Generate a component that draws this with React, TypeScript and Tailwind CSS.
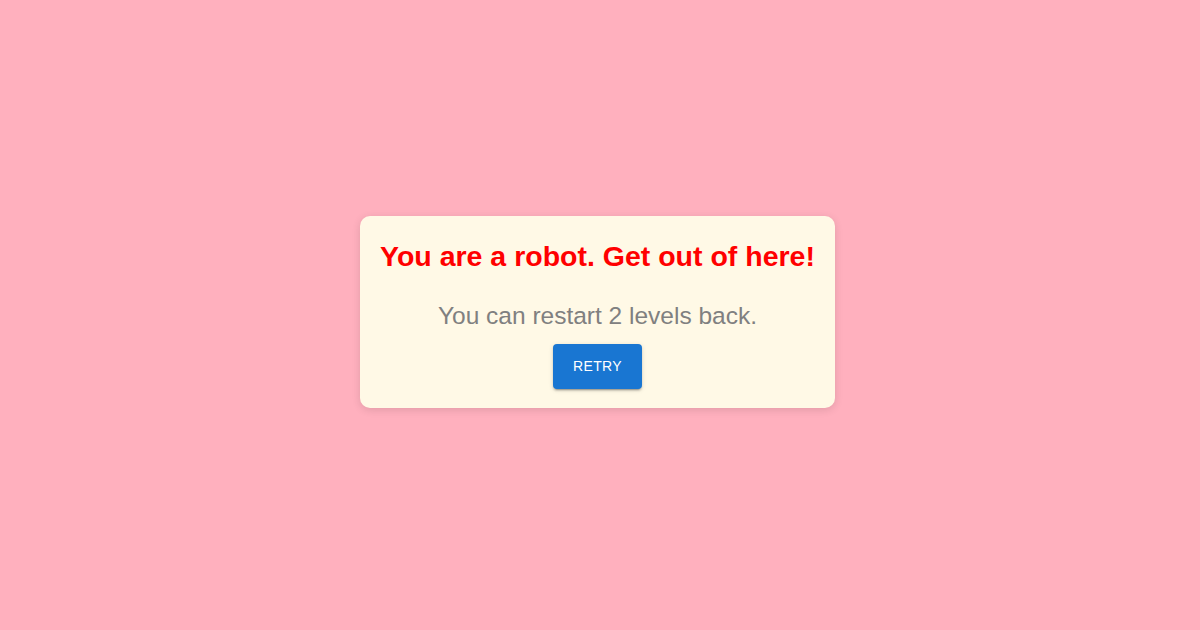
export default function App() {
  return (
    <div
      className="flex h-screen w-full items-center justify-center bg-[#ffb0be] pb-[6px] pr-[5px]"
      style={{ fontFamily: '"Liberation Sans", Arial, sans-serif' }}
    >
      <div className="flex flex-col items-center rounded-[10px] bg-[#fff9e6] px-5 pb-[19px] pt-[23px] shadow-[0_2px_8px_rgba(0,0,0,0.12)]">
        <h1 className="text-[28.5px] font-bold leading-[34px] text-[#ff0000]">
          You are a robot. Get out of here!
        </h1>
        <p className="mt-[29px] text-[24.5px] leading-[28px] text-[#808080]">
          You can restart 2 levels back.
        </p>
        <button
          type="button"
          className="mt-[14px] h-[45px] rounded-[4px] bg-[#1976d2] px-5 text-[14px] font-medium uppercase tracking-[0.4px] text-white shadow-[0_3px_1px_-2px_rgba(0,0,0,0.2),0_2px_2px_0_rgba(0,0,0,0.14),0_1px_5px_0_rgba(0,0,0,0.12)]"
        >
          Retry
        </button>
      </div>
    </div>
  )
}
